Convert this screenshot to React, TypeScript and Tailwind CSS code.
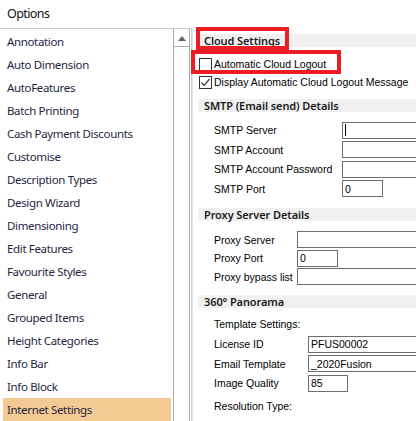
import React from "react";

const items = [
  "Annotation",
  "Auto Dimension",
  "AutoFeatures",
  "Batch Printing",
  "Cash Payment Discounts",
  "Customise",
  "Description Types",
  "Design Wizard",
  "Dimensioning",
  "Edit Features",
  "Favourite Styles",
  "General",
  "Grouped Items",
  "Height Categories",
  "Info Bar",
  "Info Block",
  "Internet Settings",
];

const label = "font-['Liberation_Sans',Arial,sans-serif] text-[10.5px] text-black leading-none";

function Band({ children, mt }: { children: React.ReactNode; mt: string }) {
  return (
    <div className={`${mt} ml-[4px] h-[13px] bg-[#f0f0f0] flex items-center pl-[6px]`}>
      <span className="font-['Noto_Sans',sans-serif] font-semibold text-[11px] tracking-[-0.1px] text-[#1a1a1a] leading-none">
        {children}
      </span>
    </div>
  );
}

function Box({ w, value, caret }: { w: string; value?: string; caret?: boolean }) {
  return (
    <div className={`${w} h-[17px] border border-[#6e6e6e] bg-white flex items-center pl-[2px] shrink-0`}>
      {caret && <div className="w-[1px] h-[12px] bg-black" />}
      {value && <span className={label}>{value}</span>}
    </div>
  );
}

function Row({ name, labelW, h, box }: { name: string; labelW: string; h: string; box: React.ReactNode }) {
  return (
    <div className={`flex items-center ${h} pl-[20px]`}>
      <div className={`${labelW} shrink-0 ${label}`}>{name}</div>
      {box}
    </div>
  );
}

function Check({ checked, text }: { checked?: boolean; text: string }) {
  return (
    <div className="flex items-center h-[18px] pl-[5px]">
      <div className="w-[13px] h-[13px] border border-[#333333] bg-white flex items-center justify-center shrink-0">
        {checked && (
          <svg width="11" height="11" viewBox="0 0 11 11">
            <path d="M1.5 5.5 L4.2 8.3 L9.5 2" fill="none" stroke="#333" strokeWidth="1.2" />
          </svg>
        )}
      </div>
      <span className={`ml-[2px] ${label}`}>{text}</span>
    </div>
  );
}

export default function App() {
  return (
    <div className="w-[416px] h-[421px] overflow-hidden bg-white relative">
      <div className="h-[28px] pl-[7px] flex items-center font-['Noto_Sans',sans-serif] text-[12.5px] tracking-[-0.6px] text-[#111]">
        Options
      </div>
      <div className="flex h-[393px]">
        <div className="w-[190px] border-t border-[#c8c8c8] flex">
          <div className="w-[173px] pt-[1px] pl-[3px] pr-[2px]">
            {items.map((it) => (
              <div
                key={it}
                className={`h-[23px] flex items-center pl-[4px] font-['Noto_Sans',sans-serif] text-[11.5px] tracking-[-0.35px] text-[#25253f] ${
                  it === "Internet Settings" ? "bg-[#f3ca94]" : ""
                }`}
              >
                {it}
              </div>
            ))}
          </div>
          <div className="w-[17px] border-l border-r border-[#a8a8a8] flex flex-col pt-[1px]">
            <div className="h-[17px] border-b border-[#a8a8a8] flex items-center justify-center">
              <svg width="8" height="5" viewBox="0 0 8 5">
                <path d="M0 5 L4 0 L8 5 Z" fill="#606060" />
              </svg>
            </div>
          </div>
        </div>
        <div className="w-[4px] flex">
          <div className="w-[1px] bg-white" />
          <div className="w-[1px] bg-[#d0d0d0]" />
          <div className="w-[1px] bg-[#e4e4e4]" />
          <div className="w-[1px] bg-white" />
        </div>
        <div className="flex-1 flex flex-col min-w-0">
          <Band mt="mt-[6px]">Cloud Settings</Band>
          <div className="mt-[8.5px]">
            <Check text="Automatic Cloud Logout" />
            <Check checked text="Display Automatic Cloud Logout Message" />
          </div>
          <Band mt="mt-[7px]">SMTP (Email send) Details</Band>
          <div className="mt-[9px]">
            <Row name="SMTP Server" labelW="w-[128px]" h="h-[19.5px]" box={<Box w="w-[90px]" caret />} />
            <Row name="SMTP Account" labelW="w-[128px]" h="h-[19.5px]" box={<Box w="w-[90px]" />} />
            <Row name="SMTP Account Password" labelW="w-[128px]" h="h-[19.5px]" box={<Box w="w-[90px]" />} />
            <Row name="SMTP Port" labelW="w-[128px]" h="h-[19.5px]" box={<Box w="w-[41px]" value="0" />} />
          </div>
          <Band mt="mt-[9px]">Proxy Server Details</Band>
          <div className="mt-[10px]">
            <Row name="Proxy Server" labelW="w-[83px]" h="h-[18.5px]" box={<Box w="w-[140px]" />} />
            <Row name="Proxy Port" labelW="w-[83px]" h="h-[18.5px]" box={<Box w="w-[41px]" value="0" />} />
            <Row name="Proxy bypass list" labelW="w-[83px]" h="h-[18.5px]" box={<Box w="w-[140px]" />} />
          </div>
          <Band mt="mt-[9px]">360° Panorama</Band>
          <div className={`mt-[6.5px] h-[19px] flex items-center pl-[20px] ${label}`}>Template Settings:</div>
          <div className="mt-[1px]">
            <Row name="License ID" labelW="w-[94px]" h="h-[19.5px]" box={<Box w="w-[130px]" value="PFUS00002" />} />
            <Row name="Email Template" labelW="w-[94px]" h="h-[19.5px]" box={<Box w="w-[130px]" value="_2020Fusion" />} />
            <Row name="Image Quality" labelW="w-[94px]" h="h-[19.5px]" box={<Box w="w-[40px]" value="85" />} />
          </div>
          <div className={`mt-[4px] h-[19px] flex items-center pl-[20px] ${label}`}>Resolution Type:</div>
        </div>
      </div>
      <div className="absolute left-[196px] top-[27px] w-[93px] h-[23px] border-[4px] border-[#ec1c24]" />
      <div className="absolute left-[191px] top-[50px] w-[150px] h-[24px] border-[4px] border-[#ec1c24]" />
    </div>
  );
}
